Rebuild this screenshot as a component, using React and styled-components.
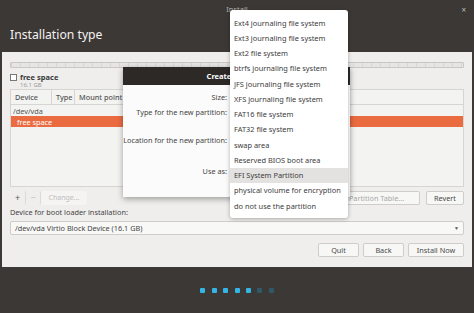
import React from "react";
import styled, { createGlobalStyle } from "styled-components";

const Global = createGlobalStyle`
  html, body { margin: 0; padding: 0; background: #3c3836; }
  body { font-family: "Noto Sans", "Open Sans", sans-serif; }
  #root { width: 474px; height: 313px; overflow: hidden; }
`;

const Window = styled.div`
  position: relative;
  width: 474px;
  height: 313px;
  display: flex;
  flex-direction: column;
  background: #3c3836;
  overflow: hidden;
`;

const Top = styled.div`
  height: 52px;
  display: flex;
  flex-direction: column;
`;

const TitleBar = styled.div`
  height: 17px;
  display: flex;
  align-items: center;
  justify-content: center;
  position: relative;
  color: #b9b5b2;
  font-size: 7.5px;
`;

const Close = styled.span`
  position: absolute;
  right: 8px;
  top: 4px;
  font-size: 8px;
  color: #bdbab7;
`;

const Heading = styled.h1`
  margin: 0;
  padding: 9px 0 0 10px;
  font-size: 12.2px;
  font-weight: 400;
  color: #f4f2f0;
`;

const Content = styled.div`
  height: 215px;
  margin: 0 2px;
  background: #efeeed;
  padding: 10px 8px 0 8px;
  box-sizing: border-box;
  display: flex;
  flex-direction: column;
  font-size: 7.3px;
  color: #3c3c3c;
`;

const PartBar = styled.div`
  height: 6px;
  border: 1px solid #c9c7c5;
  border-radius: 1px;
  box-sizing: border-box;
  background:
    repeating-linear-gradient(90deg, #d8d6d4 0 1px, #e6e5e3 1px 9px);
`;

const Legend = styled.div`
  margin-top: 4px;
  display: flex;
  flex-direction: column;
`;

const LegendRow = styled.div`
  display: flex;
  align-items: center;
  gap: 3px;
  font-weight: 700;
  font-size: 7.5px;
  color: #3a3a3a;
  height: 10px;
`;

const Check = styled.span`
  width: 5px;
  height: 5px;
  border: 1px solid #777;
  background: #fff;
`;

const LegendSize = styled.div`
  padding-left: 10px;
  font-size: 6px;
  color: #9a9a9a;
  height: 6px;
  line-height: 6px;
`;

const Table = styled.div`
  margin-top: 1px;
  height: 98px;
  box-sizing: border-box;
  border: 1px solid #d7d5d3;
  background: #f3f3f2;
  display: flex;
  flex-direction: column;
`;

const HeadRow = styled.div`
  height: 14px;
  flex-shrink: 0;
  display: flex;
  border-bottom: 1px solid #d7d5d3;
  color: #555;
`;

const HeadCell = styled.div`
  width: ${(p) => p.$w}px;
  padding-left: 4px;
  box-sizing: border-box;
  border-right: 1px solid #d7d5d3;
  display: flex;
  align-items: center;
  font-weight: 500;
`;

const Row = styled.div`
  height: 11px;
  flex-shrink: 0;
  display: flex;
  align-items: center;
  padding-left: ${(p) => (p.$indent ? 6 : 2)}px;
  background: ${(p) => (p.$sel ? "#eb6b40" : "transparent")};
  color: ${(p) => (p.$sel ? "#fff" : "#555")};
`;

const Tools = styled.div`
  margin-top: 3px;
  height: 15px;
  display: flex;
  align-items: center;
`;

const ToolBtn = styled.span`
  width: ${(p) => p.$w}px;
  height: 14px;
  display: flex;
  align-items: center;
  justify-content: center;
  color: ${(p) => (p.$dim ? "#bdbdbd" : "#555")};
  font-size: ${(p) => p.$fs || 7}px;
  border-right: ${(p) => (p.$sep ? "1px solid #dcdad8" : "none")};
  background: ${(p) => (p.$bg ? "#f5f4f3" : "transparent")};
  border-radius: 2px;
`;

const Spacer = styled.div`
  flex: 1;
`;

const Button = styled.button`
  height: 14px;
  width: ${(p) => p.$w}px;
  margin-left: ${(p) => p.$ml || 0}px;
  padding: 0;
  border: 1px solid #cfcdcb;
  border-radius: 2px;
  background: #f7f7f6;
  font-family: inherit;
  font-size: 7.3px;
  color: ${(p) => (p.$dim ? "#a8a8a8" : "#4a4a4a")};
  display: flex;
  align-items: center;
  justify-content: center;
  white-space: nowrap;
  overflow: hidden;
`;

const Label = styled.div`
  margin-top: 2px;
  height: 10px;
  line-height: 10px;
  color: #444;
`;

const Combo = styled.div`
  margin-top: 4px;
  height: 14px;
  border: 1px solid #cfcdcb;
  border-radius: 2px;
  background: #f8f8f7;
  box-sizing: border-box;
  display: flex;
  align-items: center;
  padding: 0 4px;
  color: #444;
`;

const Arrow = styled.span`
  margin-left: auto;
  font-size: 5px;
  color: #555;
`;

const Actions = styled.div`
  margin-top: 8px;
  display: flex;
  justify-content: flex-end;
`;

const Footer = styled.div`
  flex: 1;
  display: flex;
  align-items: center;
  justify-content: center;
  gap: 6.4px;
`;

const Dot = styled.span`
  width: 5px;
  height: 5px;
  border-radius: 1px;
  background: ${(p) => (p.$on ? "#33b5e6" : "#2f5868")};
`;

const Dialog = styled.div`
  position: absolute;
  left: 123px;
  top: 67px;
  width: 227px;
  height: 130px;
  background: #fbfbfb;
  box-shadow: 0 2px 6px rgba(0, 0, 0, 0.35);
  display: flex;
  flex-direction: column;
`;

const DialogHead = styled.div`
  height: 18px;
  background: #2c2927;
  color: #fff;
  font-weight: 700;
  font-size: 7.5px;
  display: flex;
  align-items: center;
  justify-content: center;
`;

const Form = styled.div`
  display: grid;
  grid-template-columns: 104px 1fr;
  grid-template-rows: 12px 18px 38px 24px;
  padding-top: 6px;
  font-size: 7.3px;
  color: #444;
`;

const FLabel = styled.div`
  text-align: right;
  white-space: nowrap;
  grid-column: 1;
  align-self: center;
`;

const Menu = styled.div`
  position: absolute;
  left: 230px;
  top: 10px;
  width: 118px;
  height: 208px;
  background: #fff;
  border-radius: 3px;
  box-shadow: 0 1px 4px rgba(0, 0, 0, 0.3);
  padding-top: 5px;
  box-sizing: border-box;
  display: flex;
  flex-direction: column;
`;

const MenuItem = styled.div`
  height: 15.25px;
  flex-shrink: 0;
  display: flex;
  align-items: center;
  padding-left: 4px;
  font-size: 7.4px;
  color: #3c3c3c;
  background: ${(p) => (p.$hl ? "#e3e2e1" : "transparent")};
  white-space: nowrap;
`;

const items = [
  "Ext4 journaling file system",
  "Ext3 journaling file system",
  "Ext2 file system",
  "btrfs journaling file system",
  "JFS journaling file system",
  "XFS journaling file system",
  "FAT16 file system",
  "FAT32 file system",
  "swap area",
  "Reserved BIOS boot area",
  "EFI System Partition",
  "physical volume for encryption",
  "do not use the partition",
];

export default function App() {
  return (
    <>
      <Global />
      <Window>
        <Top>
          <TitleBar>
            Install
            <Close>×</Close>
          </TitleBar>
          <Heading>Installation type</Heading>
        </Top>
        <Content>
          <PartBar />
          <Legend>
            <LegendRow>
              <Check />
              free space
            </LegendRow>
            <LegendSize>16.1 GB</LegendSize>
          </Legend>
          <Table>
            <HeadRow>
              <HeadCell $w={41}>Device</HeadCell>
              <HeadCell $w={23}>Type</HeadCell>
              <HeadCell $w={60}>Mount point</HeadCell>
              <HeadCell $w={50} />
              <HeadCell $w={50} />
              <HeadCell $w={50} />
              <HeadCell $w={50} />
            </HeadRow>
            <Row>/dev/vda</Row>
            <Row $sel $indent>free space</Row>
          </Table>
          <Tools>
            <ToolBtn $w={15} $sep $fs={9}>+</ToolBtn>
            <ToolBtn $w={14} $sep $dim $fs={9}>−</ToolBtn>
            <ToolBtn $w={46} $dim $bg>Change...</ToolBtn>
            <Spacer />
            <Button $w={104} $dim>New Partition Table...</Button>
            <Button $w={38} $ml={6}>Revert</Button>
          </Tools>
          <Label>Device for boot loader installation:</Label>
          <Combo>
            /dev/vda Virtio Block Device (16.1 GB)
            <Arrow>▼</Arrow>
          </Combo>
          <Actions>
            <Button $w={41}>Quit</Button>
            <Button $w={41} $ml={4}>Back</Button>
            <Button $w={56} $ml={4}>Install Now</Button>
          </Actions>
        </Content>
        <Footer>
          {[1, 1, 1, 1, 1, 0, 0].map((on, i) => (
            <Dot key={i} $on={!!on} />
          ))}
        </Footer>
        <Dialog>
          <DialogHead>Create partition</DialogHead>
          <Form>
            <FLabel>Size:</FLabel>
            <FLabel>Type for the new partition:</FLabel>
            <FLabel>Location for the new partition:</FLabel>
            <FLabel>Use as:</FLabel>
          </Form>
        </Dialog>
        <Menu>
          {items.map((t) => (
            <MenuItem key={t} $hl={t === "EFI System Partition"}>
              {t}
            </MenuItem>
          ))}
        </Menu>
      </Window>
    </>
  );
}
